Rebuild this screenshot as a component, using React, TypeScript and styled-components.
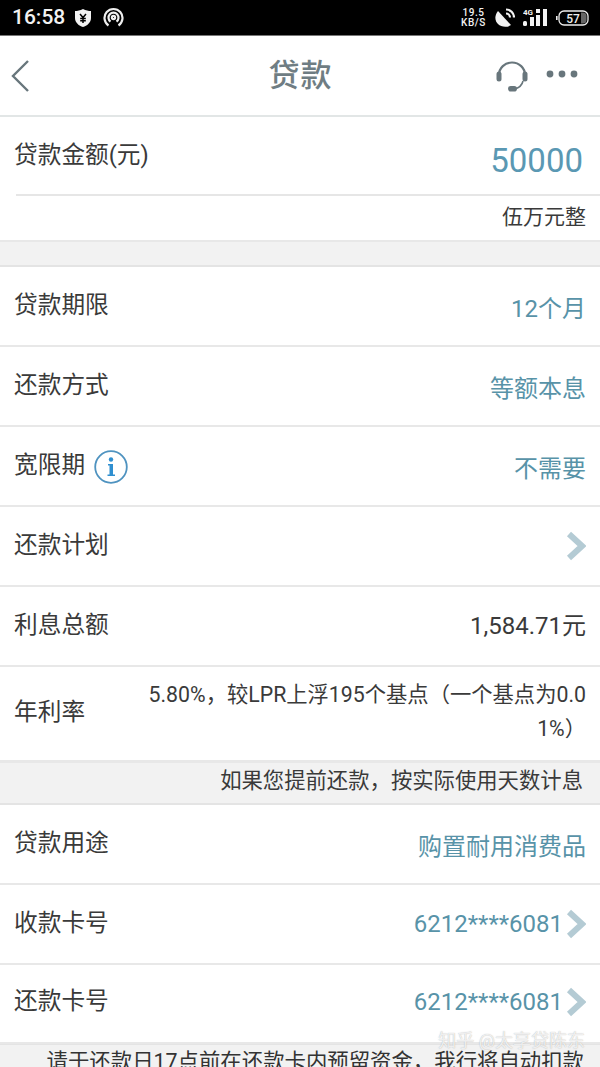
import React from "react";
import styled, { createGlobalStyle } from "styled-components";

const Global = createGlobalStyle`
  html, body { margin: 0; padding: 0; background: #fff; }
  body { font-family: Roboto, "Noto Sans CJK SC", sans-serif; overflow: hidden; }
  * { box-sizing: border-box; }
`;

const Page = styled.div`
  position: relative;
  width: 600px;
  height: 1067px;
  overflow: hidden;
  background: #fff;
  color: #3a3a3a;
`;

const StatusBar = styled.div`
  height: 35px;
  background: #000;
  color: #f2f2f2;
  display: flex;
  align-items: center;
  padding: 0 11px 0 12px;
`;
const Clock = styled.span`
  font-size: 21px;
  font-weight: 500;
  width: 51px;
  line-height: 35px;
`;
const StatusLeft = styled.div`
  display: flex;
  align-items: center;
  gap: 11px;
  flex: 1;
`;
const Speed = styled.span`
  font-size: 10px;
  font-weight: 500;
  letter-spacing: 0.6px;
  line-height: 10px;
  text-align: center;
  width: 25px;
  margin-right: 9px;
`;
const StatusRight = styled.div`
  display: flex;
  align-items: center;
`;

const NavBar = styled.div`
  height: 82px;
  display: flex;
  align-items: center;
  padding: 0 22px 0 10px;
  background: #fff;
  border-top: 1px solid #777;
  border-bottom: 2px solid #e2e6e6;
  position: relative;
`;
const NavTitle = styled.div`
  flex: 1;
  text-align: center;
  font-size: 31px;
  font-weight: 500;
  color: #6f7d83;
  letter-spacing: 1px;
  margin-left: 76px;
  line-height: 80px;
`;
const NavActions = styled.div`
  display: flex;
  align-items: center;
  gap: 17px;
`;

const AmountSection = styled.section`
  height: 125px;
  display: flex;
  flex-direction: column;
  border-bottom: 2px solid #e8e8e8;
`;
const AmountTop = styled.div`
  height: 79px;
  margin-left: 16px;
  padding-right: 17px;
  border-bottom: 2px solid #e6e6e6;
  display: flex;
  justify-content: space-between;
`;
const AmountLabel = styled.span`
  font-size: 23.7px;
  line-height: 34px;
  margin: 21px 0 0 -2px;
`;
const AmountValue = styled.span`
  font-size: 33px;
  line-height: 40px;
  margin-top: 24px;
  color: #5a98b3;
`;
const AmountWords = styled.div`
  text-align: right;
  font-size: 21px;
  line-height: 30px;
  padding: 6px 14px 0 0;
`;

const Gap = styled.div`
  height: 25px;
  background: #f2f2f2;
  border-bottom: 2px solid #e4e4e4;
`;

const Row = styled.div`
  height: 80px;
  display: flex;
  align-items: center;
  justify-content: space-between;
  padding: 0 14px;
  border-bottom: 2px solid #e8e8e8;
`;
const LastRow = styled(Row)`
  height: 79px;
  padding-bottom: 3px;
`;
const Label = styled.span`
  font-size: 23.7px;
  line-height: 34px;
  flex-shrink: 0;
  margin-top: -2px;
  display: flex;
  align-items: center;
  gap: 9px;
`;
const Value = styled.span`
  font-size: 24px;
  line-height: 34px;
  color: #5893a8;
  display: flex;
  align-items: center;
  margin-top: 6px;
`;
const CardValue = styled(Value)`
  margin-top: -1px;
`;
const ArrowValue = styled.span`
  display: flex;
  margin-left: 3px;
  margin-top: 1px;
`;
const DarkValue = styled(Value)`
  color: #3a3a3a;
  font-size: 24px;
  margin-top: 0;
`;

const RateRow = styled(Row)`
  height: 96px;
  border-bottom-width: 3px;
`;
const RateText = styled.div`
  width: 440px;
  font-size: 21.3px;
  line-height: 34px;
  text-align: right;
  word-break: break-all;
  margin-top: -3px;
`;
const RateLabel = styled(Label)`
  margin-top: -4px;
`;

const Note = styled.div`
  height: 42px;
  background: #f2f2f2;
  border-bottom: 2px solid #e4e4e4;
  font-size: 21.35px;
  line-height: 36px;
  text-align: right;
  padding-right: 17px;
`;

const BottomNote = styled.div`
  height: 31px;
  background: #f2f2f2;
  border-top: 1px solid #e4e4e4;
  font-size: 21.4px;
  line-height: 33px;
  text-align: right;
  padding-right: 16px;
  white-space: nowrap;
  color: #333;
`;

const Watermark = styled.div`
  position: absolute;
  right: 15px;
  bottom: 14px;
  font-size: 18px;
  line-height: 24px;
  color: rgba(255, 255, 255, 0.8);
  text-shadow: 0 0 1px rgba(150, 150, 150, 0.8);
`;

const Chevron = () => (
  <svg width="20" height="30" viewBox="0 0 20 30" fill="none">
    <path d="M3 3 L16 15 L3 27" stroke="#b4cbd4" strokeWidth="6" />
  </svg>
);

const Shield = () => (
  <svg width="18" height="20" viewBox="0 0 18 20">
    <path d="M9 1 C12 2.5 14.5 3 17 3 V10 C17 14.5 13 18 9 19 C5 18 1 14.5 1 10 V3 C3.5 3 6 2.5 9 1 Z" fill="#f2f2f2" />
    <path d="M6 6 L9 9.5 L12 6 M9 9.5 V15 M6.2 10.5 H11.8 M6.2 12.8 H11.8" stroke="#000" strokeWidth="1.5" fill="none" />
  </svg>
);

const Hotspot = () => (
  <svg width="21" height="21" viewBox="0 0 21 21" fill="none" stroke="#eee" strokeWidth="2.2">
    <path d="M5.5 18.5 A9 9 0 1 1 15.5 18.5" />
    <path d="M7.5 14.6 A5 5 0 1 1 13.5 14.6" />
    <circle cx="10.5" cy="10.5" r="1.6" />
  </svg>
);

const SatelliteDish = () => (
  <svg width="20" height="20" viewBox="0 0 20 20" style={{ marginRight: 8 }}>
    <path d="M3 3 C-1 8 0 13 3 16 C6 19 12 20 16 17 Z" fill="#f2f2f2" />
    <path d="M11 5.5 A4 4 0 0 1 15 9.5 M11 1.5 A8 8 0 0 1 19 9.5" stroke="#f2f2f2" strokeWidth="2.2" fill="none" />
  </svg>
);

const Signal = () => (
  <svg width="24" height="20" viewBox="0 0 24 20" style={{ marginRight: 9 }}>
    <text x="0" y="7" fontSize="8" fontWeight="700" fill="#f2f2f2" fontFamily="Roboto, sans-serif">4G</text>
    <rect x="0" y="13" width="4" height="5" rx="1.5" fill="#f2f2f2" />
    <rect x="7" y="9" width="4" height="9" fill="#f2f2f2" />
    <rect x="13" y="1" width="4" height="4" fill="#f2f2f2" />
    <rect x="13" y="7" width="4" height="11" fill="#f2f2f2" />
    <rect x="20" y="1" width="4" height="17" fill="#f2f2f2" />
  </svg>
);

const Battery = () => (
  <svg width="33" height="16" viewBox="0 0 33 16">
    <rect x="3" y="1" width="29" height="14" rx="5" fill="none" stroke="#eee" strokeWidth="1.3" />
    <path d="M25 2.5 H27 A3.5 3.5 0 0 1 30.5 6 V10 A3.5 3.5 0 0 1 27 13.5 H25 Z" fill="#666" />
    <rect x="0" y="6" width="1.6" height="4" fill="#eee" />
    <text x="17" y="12.5" textAnchor="middle" fontSize="12" fontWeight="500" fill="#eee" fontFamily="Roboto, sans-serif">57</text>
  </svg>
);

const Back = () => (
  <svg width="20" height="34" viewBox="0 0 20 34" fill="none">
    <path d="M18 2 L3 17 L18 32" stroke="#68767c" strokeWidth="2.4" />
  </svg>
);

const Headset = () => (
  <svg width="34" height="34" viewBox="0 0 34 34" fill="none">
    <path d="M4 16 A13 12.5 0 0 1 30 16" stroke="#68767c" strokeWidth="2.2" />
    <path d="M28 22 C27 27 24 29 19 30" stroke="#68767c" strokeWidth="1.6" />
    <rect x="1.5" y="12.5" width="5" height="10" rx="2.5" fill="#68767c" />
    <rect x="27.5" y="12.5" width="5" height="10" rx="2.5" fill="#68767c" />
    <rect x="13" y="27" width="9" height="5.6" rx="2.8" fill="#68767c" />
  </svg>
);

const More = () => (
  <svg width="32" height="8" viewBox="0 0 32 8" fill="#68767c" style={{ marginTop: -3 }}>
    <circle cx="4" cy="4" r="3.4" />
    <circle cx="16" cy="4" r="3.4" />
    <circle cx="28" cy="4" r="3.4" />
  </svg>
);

const InfoIcon = () => (
  <svg width="34" height="34" viewBox="0 0 34 34" fill="none" style={{ marginTop: 3 }}>
    <circle cx="17" cy="17" r="15.8" stroke="#4f93c0" strokeWidth="1.8" />
    <circle cx="17" cy="9.5" r="2.2" fill="#2f8fd0" />
    <path d="M14 14 H19 V24.5 H21 V26 H13.5 V24.5 H15.5 V15.5 H14 Z" fill="#2f8fd0" />
  </svg>
);

export default function App() {
  return (
    <Page>
      <Global />
      <StatusBar>
        <StatusLeft>
          <Clock>16:58</Clock>
          <Shield />
          <Hotspot />
        </StatusLeft>
        <StatusRight>
          <Speed>19.5<br />KB/S</Speed>
          <SatelliteDish />
          <Signal />
          <Battery />
        </StatusRight>
      </StatusBar>
      <NavBar>
        <Back />
        <NavTitle>贷款</NavTitle>
        <NavActions>
          <Headset />
          <More />
        </NavActions>
      </NavBar>
      <AmountSection>
        <AmountTop>
          <AmountLabel>贷款金额(元)</AmountLabel>
          <AmountValue>50000</AmountValue>
        </AmountTop>
        <AmountWords>伍万元整</AmountWords>
      </AmountSection>
      <Gap />
      <Row><Label>贷款期限</Label><Value>12个月</Value></Row>
      <Row><Label>还款方式</Label><Value>等额本息</Value></Row>
      <Row><Label>宽限期<InfoIcon /></Label><Value>不需要</Value></Row>
      <Row><Label>还款计划</Label><CardValue><ArrowValue><Chevron /></ArrowValue></CardValue></Row>
      <Row><Label>利息总额</Label><DarkValue>1,584.71元</DarkValue></Row>
      <RateRow>
        <RateLabel>年利率</RateLabel>
        <RateText>5.80%，较LPR上浮195个基点（一个基点为0.01%）</RateText>
      </RateRow>
      <Note>如果您提前还款，按实际使用天数计息</Note>
      <Row><Label>贷款用途</Label><Value>购置耐用消费品</Value></Row>
      <Row><Label>收款卡号</Label><CardValue>6212****6081<ArrowValue><Chevron /></ArrowValue></CardValue></Row>
      <LastRow><Label>还款卡号</Label><CardValue>6212****6081<ArrowValue><Chevron /></ArrowValue></CardValue></LastRow>
      <BottomNote>请于还款日17点前在还款卡内预留资金，我行将自动扣款</BottomNote>
      <Watermark>知乎 @太享贷陈东</Watermark>
    </Page>
  );
}
